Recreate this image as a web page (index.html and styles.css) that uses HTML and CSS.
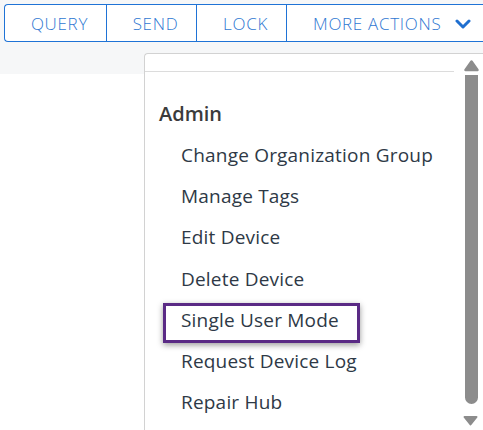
FILE: index.html
```html
<!DOCTYPE html>
<html lang="en">
<head>
<meta charset="utf-8">
<title>Device actions</title>
<link rel="stylesheet" href="styles.css">
</head>
<body>
<div class="topbar">
  <div class="toolbar">
    <button class="tb-btn tb-query">QUERY</button>
    <button class="tb-btn tb-send">SEND</button>
    <button class="tb-btn tb-lock">LOCK</button>
    <button class="tb-btn tb-more">
      <span>MORE ACTIONS</span>
      <svg class="chevron" width="16" height="10" viewBox="0 0 16 10"><path d="M2 2 L8 8 L14 2" fill="none" stroke="#1f6fd0" stroke-width="3" stroke-linecap="round" stroke-linejoin="round"/></svg>
    </button>
  </div>
</div>
<div class="menu">
  <div class="menu-body">
    <div class="menu-head"></div>
    <div class="group-title">Admin</div>
    <ul class="items">
      <li class="item">Change Organization Group</li>
      <li class="item">Manage Tags</li>
      <li class="item">Edit Device</li>
      <li class="item">Delete Device</li>
      <li class="item focused">Single User Mode</li>
      <li class="item">Request Device Log</li>
      <li class="item">Repair Hub</li>
    </ul>
  </div>
  <div class="scrollbar">
    <svg width="18" height="376" viewBox="0 0 18 376">
      <path d="M2.5 16 L8.5 7.5 L14.5 16 Z" fill="#8c8c8c" stroke="#8c8c8c" stroke-width="2.5" stroke-linejoin="round"/>
      <path d="M2 21 H15 V343.5 A6.5 6.5 0 0 1 8.5 350 A6.5 6.5 0 0 1 2 343.5 Z" fill="#8c8c8c"/>
      <path d="M1.5 363 L13.5 363 L7.5 370.5 Z" fill="#8c8c8c" stroke="#8c8c8c" stroke-width="2" stroke-linejoin="round"/>
    </svg>
  </div>
</div>
</body>
</html>
```

FILE: styles.css
```css
html, body {
  margin: 0;
  padding: 0;
  width: 483px;
  height: 430px;
  overflow: hidden;
  background: #ffffff;
  font-family: "Open Sans", "Noto Sans", sans-serif;
}

body {
  position: relative;
}

.topbar {
  height: 74px;
  background: #f6f7f8;
  padding: 4px 0 0 4px;
  box-sizing: border-box;
  overflow: hidden;
}

.toolbar {
  display: flex;
  width: 479px;
  height: 38px;
  box-sizing: border-box;
  border: 1px solid #1f73d6;
  border-right: none;
  border-radius: 4px 0 0 4px;
  background: #ffffff;
  overflow: hidden;
}

.tb-btn {
  display: flex;
  align-items: center;
  justify-content: center;
  height: 36px;
  margin: 0;
  padding: 0 0 0 8px;
  border: none;
  border-left: 1px solid #1f73d6;
  background: transparent;
  font-family: "Open Sans", "Noto Sans", sans-serif;
  font-size: 17px;
  font-weight: 300;
  letter-spacing: 0.7px;
  color: #2f78d2;
  box-sizing: content-box;
  flex-shrink: 0;
}

.tb-query {
  width: 93px;
  border-left: none;
  border-radius: 3px 0 0 3px;
}

.tb-send,
.tb-lock {
  width: 81px;
}

.tb-more {
  justify-content: flex-start;
  padding-left: 26px;
  width: 170px;
  gap: 14px;
}

.chevron {
  display: block;
  margin-top: 1px;
}

.menu {
  position: absolute;
  left: 144px;
  top: 53px;
  width: 339px;
  height: 377px;
  box-sizing: border-box;
  display: flex;
  overflow: hidden;
  background: #ffffff;
  border-top: 1px solid #d2d2d2;
  border-left: 1px solid #d2d2d2;
  border-radius: 4px 0 0 0;
}

.menu-body {
  width: 309px;
  margin-right: 9px;
  flex-shrink: 0;
}

.menu-head {
  height: 17px;
  border-bottom: 1px solid #dcdcdc;
}

.group-title {
  margin-top: 28px;
  padding-left: 14px;
  font-size: 20px;
  font-weight: 600;
  line-height: 28px;
  color: #3b3b3b;
}

.items {
  list-style: none;
  margin: 10px 0 0 0;
  padding: 0;
}

.item {
  width: fit-content;
  height: 40px;
  box-sizing: border-box;
  margin: 0 0 1.2px 18px;
  padding: 0 18px 6px 15px;
  border: 3px solid transparent;
  font-size: 19px;
  letter-spacing: 0.2px;
  line-height: 28px;
  color: #2e3946;
  white-space: nowrap;
}

.item.focused {
  border-color: #5a2a85;
  box-shadow: 0 2px 6px rgba(0, 0, 0, 0.4);
}

.scrollbar {
  width: 18px;
  flex-shrink: 0;
}

.scrollbar svg {
  display: block;
}
```
